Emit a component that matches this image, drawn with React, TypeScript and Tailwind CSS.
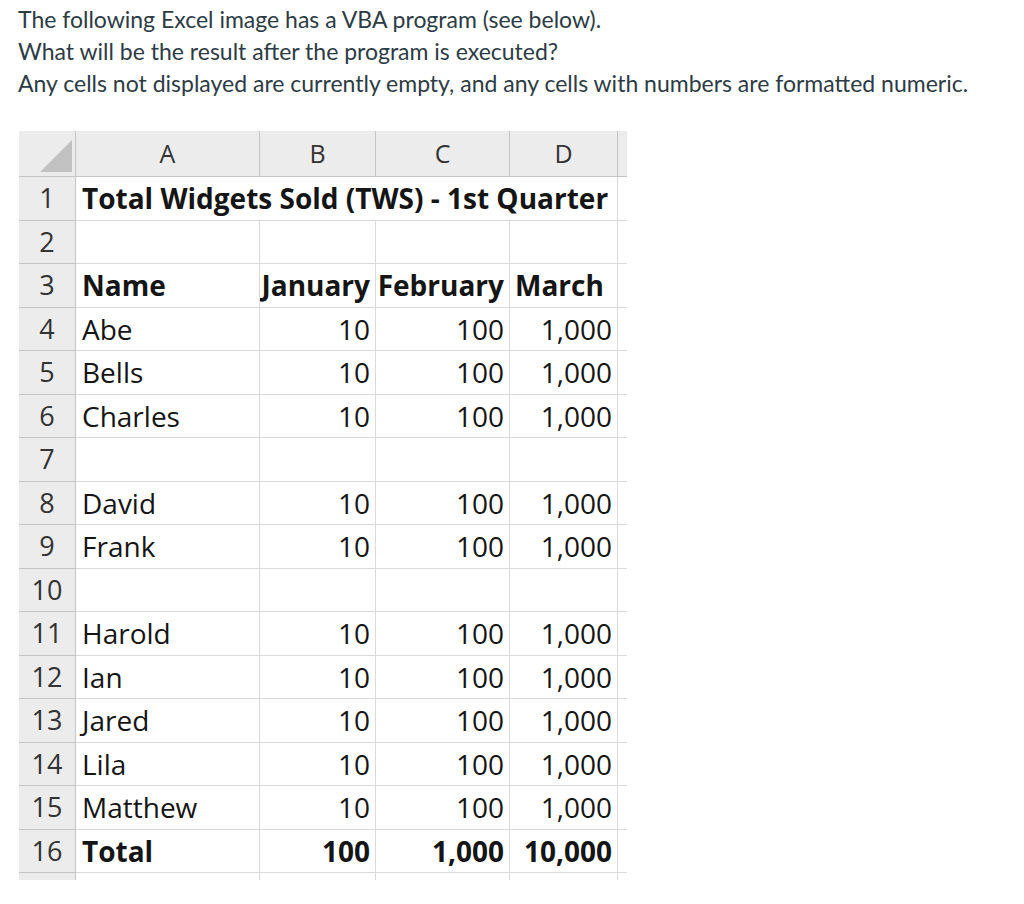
import React from 'react';

const rows: [string, string, string, string, boolean?][] = [
  ['Total Widgets Sold (TWS) - 1st Quarter', '', '', '', true],
  ['', '', '', ''],
  ['Name', 'January', 'February', 'March', true],
  ['Abe', '10', '100', '1,000'],
  ['Bells', '10', '100', '1,000'],
  ['Charles', '10', '100', '1,000'],
  ['', '', '', ''],
  ['David', '10', '100', '1,000'],
  ['Frank', '10', '100', '1,000'],
  ['', '', '', ''],
  ['Harold', '10', '100', '1,000'],
  ['Ian', '10', '100', '1,000'],
  ['Jared', '10', '100', '1,000'],
  ['Lila', '10', '100', '1,000'],
  ['Matthew', '10', '100', '1,000'],
  ['Total', '100', '1,000', '10,000', true],
];

const cell = 'border-b border-[#dadada]';
const head = 'border-r border-b border-[#c4c4c4] bg-[#ececec] text-[#333]';

export default function App() {
  return (
    <div className="min-h-screen bg-white pl-[18px] pt-[3px]" style={{ fontFamily: 'Lato, "Open Sans", sans-serif' }}>
      {/* Question text */}
      <div className="text-[23px] leading-[32px] text-[#2d3b45]">
        <p>The following Excel image has a VBA program (see below).</p>
        <p>What will be the result after the program is executed?</p>
        <p>Any cells not displayed are currently empty, and any cells with numbers are formatted numeric.</p>
      </div>

      {/* Spreadsheet screenshot */}
      <div
        className="mt-[32px] ml-px grid w-max grid-cols-[57px_184px_116px_134px_108px_9px] text-[28px] font-medium text-[#151515]"
        style={{ fontFamily: '"Open Sans", "Noto Sans", sans-serif' }}
      >
        {/* column header row */}
        <div className={`${head} relative h-[46px]`}>
          <svg className="absolute left-[21px] top-[9px]" width="32" height="32" viewBox="0 0 32 32">
            <polygon points="32,0 32,32 0,32" fill="#c2c2c2" />
          </svg>
        </div>
        {['A', 'B', 'C', 'D'].map((l) => (
          <div key={l} className={`${head} flex h-[46px] items-center justify-center text-[25px] font-normal`}>
            {l}
          </div>
        ))}
        <div className={`${head} border-r-0 h-[46px]`} />

        {rows.map(([a, b, c, d, bold], i) => {
          const w = bold ? 'font-bold' : '';
          const line = i === 0 ? '' : 'border-r';
          return (
            <React.Fragment key={i}>
              <div className={`${head} flex h-[43.5px] items-center justify-center text-[27px]`}>{i + 1}</div>
              <div className={`${cell} ${line} relative z-10 flex h-[43.5px] items-center whitespace-nowrap pl-[6px] ${w}`}>
                {a}
              </div>
              <div className={`${cell} ${line} flex h-[43.5px] items-center justify-end pr-[5px] ${w}`}>{b}</div>
              <div className={`${cell} ${line} flex h-[43.5px] items-center justify-end pr-[5px] ${w}`}>{c}</div>
              <div
                className={`${cell} border-r flex h-[43.5px] items-center ${
                  i === 2 ? 'justify-start pl-[5px]' : 'justify-end pr-[5px]'
                } ${w}`}
              >
                {d}
              </div>
              <div className={`${cell} h-[43.5px]`} />
            </React.Fragment>
          );
        })}

        {/* partial row 17 */}
        <div className="h-[7px] border-r border-[#c4c4c4] bg-[#ececec]" />
        <div className="h-[7px] border-r border-[#dadada]" />
        <div className="h-[7px] border-r border-[#dadada]" />
        <div className="h-[7px] border-r border-[#dadada]" />
        <div className="h-[7px] border-r border-[#dadada]" />
        <div className="h-[7px]" />
      </div>
    </div>
  );
}
